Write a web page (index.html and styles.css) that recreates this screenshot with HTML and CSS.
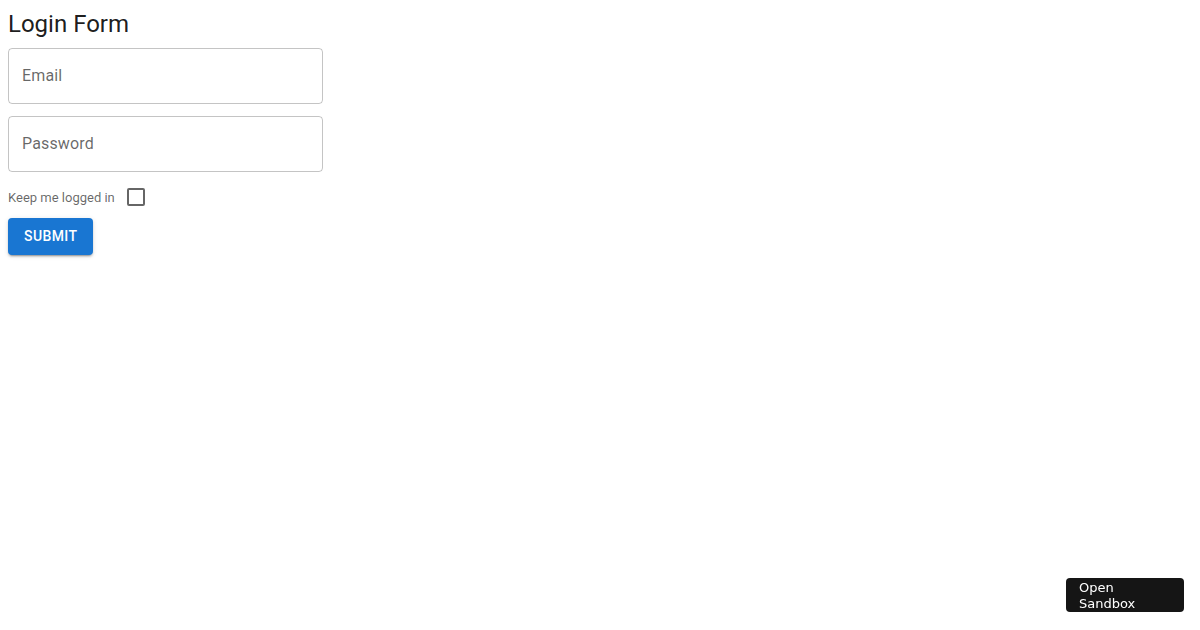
FILE: index.html
```html
<!DOCTYPE html>
<html>
<head>
<meta charset="utf-8">
<title>Login Form</title>
<link rel="stylesheet" href="styles.css">
</head>
<body>
<div class="form">
  <h5 class="title">Login Form</h5>
  <div class="field"><span class="label">Email</span></div>
  <div class="field"><span class="label">Password</span></div>
  <label class="check-row">
    <span class="check-text">Keep me logged in</span>
    <span class="checkbox"></span>
  </label>
  <button class="submit">Submit</button>
</div>
<button class="sandbox">Open Sandbox</button>
</body>
</html>
```
FILE: styles.css
```css
html, body {
  margin: 0;
  padding: 0;
  background: #fff;
}
body {
  padding: 8px;
  font-family: Roboto, "Liberation Sans", sans-serif;
}
.form {
  display: flex;
  flex-direction: column;
  align-items: flex-start;
}
.title {
  margin: 0 0 8px;
  font-size: 24px;
  font-weight: 400;
  line-height: 32px;
  color: rgba(0, 0, 0, 0.9);
}
.field {
  box-sizing: border-box;
  width: 315px;
  height: 56px;
  border: 1px solid rgba(0, 0, 0, 0.23);
  border-radius: 4px;
  padding: 14px 13px 16px;
  margin-bottom: 12px;
  display: flex;
  align-items: center;
}
.label {
  font-size: 16px;
  line-height: 23px;
  color: rgba(0, 0, 0, 0.6);
  letter-spacing: 0.00938em;
}
.check-row {
  display: flex;
  align-items: center;
  height: 26px;
  margin-bottom: 8px;
}
.check-text {
  font-size: 13px;
  color: rgba(0, 0, 0, 0.6);
  margin-right: 12px;
}
.checkbox {
  box-sizing: border-box;
  width: 18px;
  height: 18px;
  border: 2px solid rgba(0, 0, 0, 0.6);
  border-radius: 2px;
}
.submit {
  font-family: Roboto, "Liberation Sans", sans-serif;
  font-size: 14px;
  font-weight: 500;
  line-height: 1.75;
  letter-spacing: 0.02857em;
  text-transform: uppercase;
  color: #fff;
  background: #1976d2;
  border: 0;
  border-radius: 4px;
  padding: 6px 16px;
  box-shadow: 0 3px 1px -2px rgba(0,0,0,0.2), 0 2px 2px 0 rgba(0,0,0,0.14), 0 1px 5px 0 rgba(0,0,0,0.12);
}
.sandbox {
  position: fixed;
  right: 16px;
  bottom: 18px;
  box-sizing: border-box;
  width: 118px;
  height: 34px;
  padding: 2px 13px 0;
  text-align: left;
  font-family: "DejaVu Sans", sans-serif;
  font-size: 13px;
  line-height: 16px;
  color: #fff;
  background: #151515;
  border: 0;
  border-radius: 4px;
}
```
